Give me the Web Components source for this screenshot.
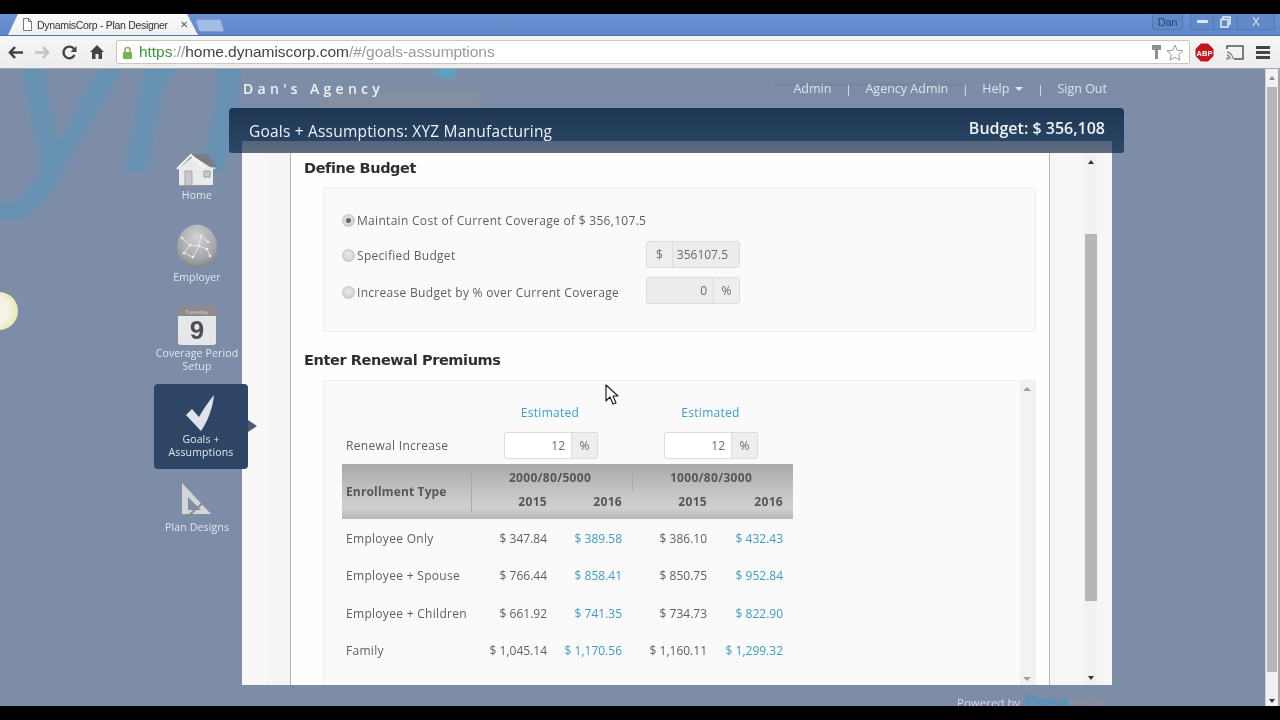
<!DOCTYPE html>
<html>
<head>
<meta charset="utf-8">
<title>DynamisCorp - Plan Designer</title>
<style>
  html, body { margin: 0; height: 720px; overflow: hidden; background: #000; }
  body { font-family: "Open Sans", "DejaVu Sans", sans-serif; }
</style>
</head>
<body>
<app-shell>
  <browser-frame slot="browser"></browser-frame>
  <top-nav slot="top"></top-nav>
  <title-bar slot="top" title-text="Goals + Assumptions: XYZ Manufacturing" budget="Budget: $ 356,108"></title-bar>
  <side-nav slot="side"></side-nav>
  <main-panel slot="main">
    <form-section heading="Define Budget" style="--head-gap:5px"><budget-form></budget-form></form-section>
    <form-section heading="Enter Renewal Premiums" style="--head-gap:6px;--head-top:14px;--box-h:320px;--box-bar:block"><premium-table></premium-table></form-section>
  </main-panel>
</app-shell>

<script>
class AppShell extends HTMLElement {
  constructor() {
    super();
    this.attachShadow({ mode: "open" });
    this.shadowRoot.innerHTML = `
    <style>
    :host { display: flex; flex-direction: column; width: 1280px; height: 720px; background: #000; filter: blur(.35px); }
    .bar { height: 14px; flex: none; background: #000; position: relative; z-index: 5; }
    .viewport {
        flex: 1;
        min-height: 0;
        position: relative;
        overflow: hidden;
        background: #7e8da7;
        display: flex;
    }
    .page { width: 1265px; flex: none; display: flex; flex-direction: column; position: relative; }
    .top { display: flex; flex-direction: column; }
    .row { display: flex; padding-left: 154px; }
    .side { display: block; width: 94px; flex: none; margin-right: -6px; position: relative; z-index: 2; }
    .powered {
        margin: 9px 0 0 957px;
        display: flex;
        align-items: center;
        gap: 5px;
        font-size: 11.500px;
        color: #d5dce8;
    }
    .logo { font-size: 17px; line-height: 17px; font-weight: 700; color: #3f97c4; filter: blur(.8px); }
    .logo b { color: #8b8f98; }
    /* backdrop art, sits under everything */
    .mark {
        position: absolute;
        left: -162px;
        top: -112px;
        font: italic 400 232px "Liberation Sans", sans-serif;
        -webkit-text-stroke: 3px #5f93b6;
        color: #5f93b6;
        opacity: .72;
        filter: blur(2px);
        white-space: nowrap;
    }
    .mark::before { content: "Dyn"; }
    .ball {
        position: absolute;
        left: -20px;
        top: 223px;
        width: 38px;
        height: 38px;
        border-radius: 50%;
        background: radial-gradient(circle at 40% 50%, #f3f3e8 0 45%, #e4e69c 85%, #d3d68a 100%);
    }
    .smudge { position: absolute; background: #86919f; filter: blur(5px); opacity: .7; }
    .dot { position: absolute; left: 436px; top: -6px; width: 20px; height: 16px; border-radius: 50%; background: #5d9fc6; filter: blur(2px); }
    .cursor { position: absolute; left: 605px; top: 315px; z-index: 4; }
    .scroll {
        width: 15px;
        flex: none;
        display: flex;
        flex-direction: column;
        align-items: stretch;
        background: #f1f1f1;
        position: relative;
        border-left: 1px solid #cfd2d6;
        border-right: 2px solid #a4a6a9;
        box-sizing: border-box;
    }
    .scroll i { display: block; width: 0; height: 0; margin: 7px auto 7px; border: 3px solid transparent; border-top: 0; border-bottom: 4px solid #8a8a8a; }
    .thumb { flex: 1; margin: 0 1px; background: #b6b6b6; }
    .scroll i.down { margin: 27px auto 3px; border-bottom: 0; border-top: 4px solid #333; }
    </style>
    <div class="bar"></div>
    <slot name="browser"></slot>
    <div class="viewport">
      <div class="page">
        <span class="mark"></span>
        <span class="dot"></span>
        <span class="smudge" style="left:320px;top:22px;width:160px;height:18px"></span>
        <span class="smudge" style="left:775px;top:14px;width:190px;height:3px;background:#6f7c92;filter:blur(1px);opacity:.45"></span>
        <span class="ball"></span>
        <div class="top"><slot name="top"></slot></div>
        <div class="row">
          <div class="side"><slot name="side"></slot></div>
          <slot name="main"></slot>
        </div>
        <div class="powered"><span>Powered by</span><span class="logo">Dyna<b>mix</b></span></div>
        <svg class="cursor" width="14" height="22" viewBox="0 0 14 22">
          <path d="M1 1v16l4-4 3 7 3-1-3-7h5z" fill="#fff" stroke="#222" stroke-width="1.2" stroke-linejoin="round"/>
        </svg>
      </div>
      <div class="scroll"><i></i><div class="thumb"></div><i class="down"></i></div>
    </div>
    <div class="bar"></div>
    `;
  }
}

class BrowserFrame extends HTMLElement {
  constructor() {
    super();
    this.attachShadow({ mode: "open" });
    this.shadowRoot.innerHTML = `
    <style>
    :host { display: block; flex: none; font-family: "Liberation Sans", sans-serif; }
    .tabs {
        height: 22px;
        display: flex;
        align-items: flex-end;
        padding-left: 8px;
        background: linear-gradient(#6c93d4, #5f87c9);
        border-bottom: 1px solid #4f73ad;
        box-sizing: border-box;
    }
    .tab {
        width: 190px;
        height: 21px;
        box-sizing: border-box;
        background: linear-gradient(#fafafa, #f1f1f1);
        clip-path: polygon(0 100%, 10px 0, calc(100% - 11px) 0, 100% 100%);
        display: flex;
        align-items: center;
        padding: 0 0 0 14px;
        gap: 4px;
        font-size: 10.500px;
        letter-spacing: -.3px;
        white-space: nowrap;
        color: #333;
    }
    .tab .x { margin-left: 8px; font-size: 10px; color: #555; }
    .new {
        width: 26px;
        height: 13px;
        margin: 0 0 3px -1px;
        background: #a3bde6;
        border: 1px solid #7b9bcd;
        box-sizing: border-box;
        transform: skewX(16deg);
        border-radius: 2px;
    }
    .win { margin-left: auto; align-self: flex-start; display: flex; height: 16px; margin-right: 5px; color: #26456f; font-size: 11px; }
    .win span {
        display: flex; align-items: center; justify-content: center;
        background: #628ac9;
        border: 1px solid #5379b5;
        border-top: 0;
        box-sizing: border-box;
        border-radius: 0 0 3px 3px;
    }
    .win .who { width: 31px; margin-right: 7px; letter-spacing: -.3px; }
    .win .c { width: 24px; border-radius: 0; border-left: 0; }
    .win .c.first { border-left: 1px solid #5379b5; border-radius: 0 0 0 3px; }
    .win .close { width: 37px; border-left: 0; border-radius: 0 0 3px 0; font-size: 12px; color: #dfe7f4; }
    .tools {
        height: 33px;
        box-sizing: border-box;
        display: flex;
        align-items: center;
        background: linear-gradient(#f6f6f6, #ececec);
        border-bottom: 1px solid #a5a8ac;
    }
    .tool { flex: none; width: 27px; display: flex; justify-content: center; }
    .tools .lead { width: 2px; }
    .omni {
        flex: none;
        width: 1074px;
        height: 24px;
        margin-left: 6px;
        box-sizing: border-box;
        background: #fff;
        border: 1px solid #c9c9b8;
        border-radius: 2px;
        display: flex;
        align-items: center;
        padding-left: 5px;
        font-family: "Liberation Sans", sans-serif;
        font-size: 15.5px;
        letter-spacing: -.04px;
        color: #9a9a9a;
    }
    .omni svg { flex: none; }
    .omni .lock { margin-right: 6px; }
    .omni .https { color: #3a9a36; }
    .omni .host { color: #444; }
    .end { margin-left: auto; display: flex; align-items: center; margin-right: 5px; }
    .right { display: flex; align-items: center; margin-left: 1px; }
    </style>
    <div class="tabs">
      <div class="tab">
        <svg width="11" height="13" viewBox="0 0 11 13"><path d="M1.5.5h5l3 3v9h-8zM6.5.5v3h3" fill="#fff" stroke="#777"/></svg>
        <span>DynamisCorp - Plan Designer</span><span class="x">&#10005;</span>
      </div>
      <div class="new"></div>
      <div class="win">
        <span class="who">Dan</span>
        <span class="c first"><svg width="11" height="4"><rect width="11" height="3" rx="1" fill="#dfe7f4"/></svg></span>
        <span class="c"><svg width="11" height="12" viewBox="0 0 11 12"><path d="M3 3V1h7v7H8M1 3.500h7v7.500H1z" fill="none" stroke="#e4ebf6" stroke-width="1.500"/></svg></span>
        <span class="close">X</span>
      </div>
    </div>
    <div class="tools">
      <span class="lead"></span>
      <span class="tool"><svg width="15" height="13" viewBox="0 0 15 13"><path d="M7 1 2 6.500 7 12M2 6.500h13" fill="none" stroke="#444" stroke-width="2.600"/></svg></span>
      <span class="tool"><svg width="15" height="13" viewBox="0 0 15 13"><path d="M8 1l5 5.500L8 12M13 6.500H0" fill="none" stroke="#c2c2c2" stroke-width="2.600"/></svg></span>
      <span class="tool"><svg width="15" height="15" viewBox="0 0 15 15"><path d="M12.500 10A5.800 5.800 0 1 1 12 4" fill="none" stroke="#444" stroke-width="2.400"/><path d="M14.500 1v6h-6z" fill="#444"/></svg></span>
      <span class="tool"><svg width="14" height="14" viewBox="0 0 14 14"><path d="M7 0 0 7h2v7h3.500V9h3v5H12V7h2z" fill="#444"/></svg></span>
      <div class="omni">
        <svg class="lock" width="11" height="13" viewBox="0 0 11 13"><path d="M3 6V4a2.500 2.500 0 0 1 5 0v2" fill="none" stroke="#8aa86c" stroke-width="1.500"/><rect x="1" y="6" width="9" height="7" rx="1" fill="#79b64a"/></svg>
        <span class="https">https</span><span>://</span><span class="host">home.dynamiscorp.com</span><span>/#/goals-assumptions</span>
        <span class="end">
          <svg width="12" height="16" viewBox="0 0 12 16" style="margin-right:3px"><path d="M1 1h9v5H7v9H4V6H1z" fill="#8f8f8f"/></svg>
          <svg width="18" height="17" viewBox="0 0 18 17"><path d="M9 1l2.300 5.300 5.700.5-4.300 3.800 1.300 5.600L9 13.300 4 16.200l1.300-5.600L1 6.800l5.700-.5z" fill="#fff" stroke="#9a9a9a"/></svg>
        </span>
      </div>
      <div class="right">
        <svg style="margin-left:4px" width="19" height="19" viewBox="0 0 19 19"><path d="M6 .5h7L18.500 6v7L13 18.500H6L.5 13V6z" fill="#c4161c"/><text x="9.500" y="12.500" font-size="7.500" font-weight="700" fill="#fff" text-anchor="middle" font-family="Liberation Sans">ABP</text></svg>
        <svg style="margin-left:12px" width="18" height="15" viewBox="0 0 18 15"><path d="M1 4V1h16v13H8" fill="none" stroke="#555" stroke-width="1.500"/><path d="M1 7a7 7 0 0 1 6 7M1 10a4 4 0 0 1 3 4" fill="none" stroke="#888" stroke-width="1.300"/><circle cx="1.500" cy="13.500" r="1.200" fill="#888"/></svg>
        <svg style="margin-left:12px" width="14" height="13" viewBox="0 0 14 13"><path d="M0 0h14v3H0zM0 5h14v3H0zM0 10h14v3H0z" fill="#444"/></svg>
      </div>
    </div>
    `;
  }
}

class TopNav extends HTMLElement {
  constructor() {
    super();
    this.attachShadow({ mode: "open" });
    this.shadowRoot.innerHTML = `
    <style>
    :host {
        display: flex;
        align-items: center;
        height: 39px;
        padding: 0 158px 0 243px;
        position: relative;
        color: #dce2ec;
        font-size: 12.500px;
    }
    .brand { font-size: 14px; font-weight: 600; letter-spacing: 4.300px; color: #eef1f5; }
    ul { display: flex; align-items: center; margin: 0 0 0 auto; padding: 0; list-style: none; }
    li + li::before { content: "|"; margin: 0 14px; font-size: 11px; color: #e8ecf2; }
    .caret { display: inline-block; margin-left: 6px; border: 4px solid transparent; border-top-color: #e2e7ef; border-bottom: 0; vertical-align: 2px; }
    </style>
    <span class="brand">Dan's Agency</span>
    <ul>
      <li>Admin</li>
      <li>Agency Admin</li>
      <li>Help<span class="caret"></span></li>
      <li>Sign Out</li>
    </ul>
    `;
  }
}

class TitleBar extends HTMLElement {
  constructor() {
    super();
    this.attachShadow({ mode: "open" });
    this.shadowRoot.innerHTML = `
    <style>
    :host {
        display: flex;
        justify-content: space-between;
        align-items: flex-start;
        box-sizing: border-box;
        width: 895px;
        height: 45px;
        margin-left: 229px;
        padding: 12px 19px 0 20px;
        background: linear-gradient(#1d3653, #2c4866);
        border-radius: 4px 4px 3px 3px;
        color: #eef1f5;
        position: relative;
        font-size: 15.500px;
        letter-spacing: .2px;
    }
    :host::after {
        content: "";
        position: absolute;
        left: 13px;
        right: 12px;
        top: 33px;
        bottom: 0;
        background: linear-gradient(#54647a, #5f6d82);
    }
    span { position: relative; z-index: 1; }
    .budget { font-size: 16px; font-weight: 600; margin-top: -3px; letter-spacing: 0; }
    </style>
    <span class="name"></span><span class="budget"></span>
    `;
  }

  connectedCallback() {
    this.shadowRoot.querySelector(".name").textContent = this.getAttribute("title-text");
    this.shadowRoot.querySelector(".budget").textContent = this.getAttribute("budget");
  }
}

const NAV_ICONS = {
  home: `<svg width="42" height="34" viewBox="0 0 42 34">
    <path d="M2 16 19 2h10l12 13-4 1v16l-34 1V16z" fill="#e9eaec"/>
    <path d="M14 1h17l11 14-8-1z" fill="#7a7d84"/>
    <path d="M1 16 15 2l13 13" fill="none" stroke="#f5f5f5" stroke-width="2"/>
    <path d="M9 18h7v15H9z" fill="#c6c8cb" stroke="#a5a7ab"/>
    <path d="M28 18h6v6h-6z" fill="#c6c8cb" stroke="#9a9da2"/>
    <path d="M3 33h35" stroke="#8a8e94" stroke-width="1.500"/>
  </svg>`,
  globe: `<svg width="42" height="45" viewBox="0 0 42 45">
    <defs><radialGradient id="g" cx=".5" cy=".3" r=".75"><stop offset="0" stop-color="#d2d3d5"/><stop offset=".7" stop-color="#a0a2a5"/><stop offset="1" stop-color="#77797d"/></radialGradient></defs>
    <ellipse cx="21" cy="22.500" rx="20" ry="22" fill="url(#g)"/>
    <path d="M6 14l8 7-6 8 9 4 6-11 8 3 3 7M14 21l9 1M23 22l2-10 7 6" fill="none" stroke="#e4e5e7" stroke-width="1"/>
    <g fill="#eeeff0"><circle cx="6" cy="14" r="1.300"/><circle cx="14" cy="21" r="1.300"/><circle cx="8" cy="29" r="1.300"/><circle cx="17" cy="33" r="1.300"/><circle cx="23" cy="22" r="1.300"/><circle cx="25" cy="12" r="1.300"/><circle cx="32" cy="18" r="1.300"/><circle cx="31" cy="25" r="1.300"/><circle cx="34" cy="32" r="1.300"/></g>
  </svg>`,
  calendar: `<svg width="38" height="39" viewBox="0 0 38 39">
    <path d="M3 0h32a3 3 0 0 1 3 3v7H0V3a3 3 0 0 1 3-3z" fill="#8e8a8c"/>
    <path d="M0 10h38v26a3 3 0 0 1-3 3H3a3 3 0 0 1-3-3z" fill="#e6e7e9"/>
    <text x="19" y="7.500" font-size="6" fill="#cfcfcf" text-anchor="middle" font-family="Liberation Sans">Tuesday</text>
    <text x="19" y="33" font-size="26" font-weight="700" fill="#4d4f52" text-anchor="middle" font-family="Liberation Sans">9</text>
  </svg>`,
  check: `<svg width="32" height="36" viewBox="0 0 32 36">
    <path d="M1 20l6-6 7 8C19 13 24 6 29 0c-1 12-6 26-13 36z" fill="#dfe3ea"/>
  </svg>`,
  square: `<svg width="32" height="36" viewBox="0 0 32 36">
    <path d="M1 0 30 31H1z" fill="#d3d5d9"/>
    <path d="M7 14 20 27H7z" fill="#7e8da7"/>
    <path d="M5 35 25 17" stroke="#8a8a86" stroke-width="2"/>
  </svg>`
};

class NavItem extends HTMLElement {
  constructor() {
    super();
    this.attachShadow({ mode: "open" });
    this.shadowRoot.innerHTML = `
    <style>
    :host {
        display: flex;
        flex-direction: column;
        align-items: center;
        box-sizing: border-box;
        width: 86px;
        font-size: 10.500px;
        line-height: 13px;
        letter-spacing: .15px;
        text-align: center;
        color: #e1e6ee;
        position: relative;
    }
    :host([active]) {
        width: 94px;
        height: 85px;
        padding-top: 11px;
        background: #2f4566;
        border-radius: 4px;
    }
    :host([active])::after {
        content: "";
        position: absolute;
        left: 100%;
        top: 36px;
        border: 6px solid transparent;
        border-left: 9px solid #4e5c70;
        border-right: 0;
    }
    svg { display: block; }
    .ico { display: block; margin-bottom: 2px; }
    </style>
    <span class="ico"></span>
    <slot></slot>
    `;
  }

  connectedCallback() {
    this.shadowRoot.querySelector(".ico").innerHTML = NAV_ICONS[this.getAttribute("icon")];
  }
}

class SideNav extends HTMLElement {
  constructor() {
    super();
    this.attachShadow({ mode: "open" });
    this.shadowRoot.innerHTML = `
    <style>
    :host { display: flex; flex-direction: column; align-items: flex-start; }
    </style>
    <nav-item icon="home">Home</nav-item>
    <nav-item icon="globe" style="margin-top:22px">Employer</nav-item>
    <nav-item icon="calendar" style="margin-top:22px">Coverage Period<br>Setup</nav-item>
    <nav-item icon="check" active style="margin-top:11px">Goals +<br>Assumptions</nav-item>
    <nav-item icon="square" style="margin-top:14px">Plan Designs</nav-item>
    `;
  }
}

class MainPanel extends HTMLElement {
  constructor() {
    super();
    this.attachShadow({ mode: "open" });
    this.shadowRoot.innerHTML = `
    <style>
    :host {
        display: flex;
        flex: none;
        width: 870px;
        height: 532px;
        background: #f6f6f6;
        overflow: hidden;
        position: relative;
    }
    .gutter { width: 48px; flex: none; background: linear-gradient(90deg, #f8f8f8 0 24px, #f5f5f5 24px); }
    .content {
        width: 760px;
        flex: none;
        box-sizing: border-box;
        background: #fefefd;
        border-left: 1.500px solid #b4b4b4;
        border-right: 1.500px solid #b4b4b4;
        padding: 1px 13px 0 32px;
    }
    .rail { flex: 1; display: flex; padding-left: 34px; padding-right: 15px; }
    .track { width: 13px; display: flex; flex-direction: column; background: #f1f1f1; }
    .track i { display: block; width: 0; height: 0; margin: 7px auto 0; border: 3.500px solid transparent; border-top: 0; border-bottom: 4px solid #333; }
    .track i.down { margin: 0 auto 5px; border-bottom: 0; border-top: 4px solid #333; }
    .thumb { margin: 70px 0 0 1px; height: 367px; background: #b6b6b6; }
    .fill { flex: 1; }
    </style>
    <div class="gutter"></div>
    <div class="content"><slot></slot></div>
    <div class="rail">
      <div class="track"><i></i><div class="thumb"></div><div class="fill"></div><i class="down"></i></div>
    </div>
    `;
  }
}

class FormSection extends HTMLElement {
  constructor() {
    super();
    this.attachShadow({ mode: "open" });
    this.shadowRoot.innerHTML = `
    <style>
    :host { display: block; }
    h2 {
        margin: var(--head-top, 0) 0 var(--head-gap, 5px) -19px;
        height: 28px;
        font: 700 14.500px/28px "DejaVu Sans", sans-serif;
        letter-spacing: -.4px;
        color: #2d2f33;
    }
    .box {
        box-sizing: border-box;
        height: var(--box-h, 145px);
        background: #fafafa;
        border: 1px solid #efefef;
        border-radius: 2px;
        position: relative;
    }
    .bar { display: var(--box-bar, none); position: absolute; right: 0; top: 0; bottom: 0; width: 15px; background: #f2f2f2; }
    .bar i { position: absolute; left: 3px; width: 0; height: 0; border: 4px solid transparent; }
    .bar .up { top: 6px; border-top: 0; border-bottom: 4px solid #a0a0a0; }
    .bar .down { top: 296px; border-bottom: 0; border-top: 4px solid #a0a0a0; }
    </style>
    <h2></h2>
    <div class="box"><slot></slot><div class="bar"><i class="up"></i><i class="down"></i></div></div>
    `;
  }

  connectedCallback() {
    this.shadowRoot.querySelector("h2").textContent = this.getAttribute("heading");
  }
}

class InputGroup extends HTMLElement {
  constructor() {
    super();
    this.attachShadow({ mode: "open" });
    this.shadowRoot.innerHTML = `
    <style>
    :host {
        display: inline-flex;
        box-sizing: border-box;
        width: 94px;
        height: 27px;
        border: 1px solid #dcdcdc;
        border-radius: 3px;
        background: #ececec;
        font-size: 12px;
        letter-spacing: 0;
        color: #6a6a6a;
        overflow: hidden;
    }
    :host([plain]) .val { background: #fff; }
    :host([prefix]) .val { padding-right: 11px; }
    .val { flex: 1; display: flex; align-items: center; justify-content: flex-end; padding-right: 6px; }
    .add { display: flex; align-items: center; justify-content: center; flex: none; width: 25px; background: #eeeeee; }
    .add.pre { border-right: 1px solid #dcdcdc; }
    .add.post { border-left: 1px solid #dcdcdc; }
    </style>
    <span class="add pre"></span>
    <span class="val"></span>
    <span class="add post"></span>
    `;
  }

  connectedCallback() {
    const pre = this.shadowRoot.querySelector(".pre");
    const post = this.shadowRoot.querySelector(".post");
    if (this.hasAttribute("prefix")) {
      pre.textContent = this.getAttribute("prefix");
    } else {
      pre.style.display = "none";
    }
    if (this.hasAttribute("suffix")) {
      post.textContent = this.getAttribute("suffix");
    } else {
      post.style.display = "none";
    }
    this.shadowRoot.querySelector(".val").textContent = this.getAttribute("value");
  }
}

class RadioRow extends HTMLElement {
  constructor() {
    super();
    this.attachShadow({ mode: "open" });
    this.shadowRoot.innerHTML = `
    <style>
    :host {
        display: flex;
        align-items: center;
        font-size: 12px;
        letter-spacing: .3px;
        color: #5c5f63;
    }
    .radio {
        width: 11px;
        height: 11px;
        margin-right: 2px;
        flex: none;
        border-radius: 50%;
        background: radial-gradient(circle at 50% 40%, #eaeaea, #c9c9c9);
        border: 1px solid #c4c4c4;
        display: flex;
        align-items: center;
        justify-content: center;
    }
    :host([checked]) .radio::after { content: ""; width: 5px; height: 5px; border-radius: 50%; background: #666; }
    .label { width: 289px; flex: none; white-space: nowrap; }
    ::slotted(input-group) { margin-top: -3px; }
    </style>
    <span class="radio"></span>
    <span class="label"><slot></slot></span>
    <slot name="input"></slot>
    `;
  }
}

class BudgetForm extends HTMLElement {
  constructor() {
    super();
    this.attachShadow({ mode: "open" });
    this.shadowRoot.innerHTML = `
    <style>
    :host {
        display: grid;
        grid-template-rows: 36px 35px 38px;
        padding: 14px 0 0 18px;
    }
    </style>
    <radio-row checked>Maintain Cost of Current Coverage of $ 356,107.5</radio-row>
    <radio-row>Specified Budget<input-group slot="input" prefix="$" value="356107.5"></input-group></radio-row>
    <radio-row>Increase Budget by % over Current Coverage<input-group slot="input" suffix="%" value="0"></input-group></radio-row>
    `;
  }
}

const PREMIUM_ROWS = [
  ["Employee Only", "$ 347.84", "$ 389.58", "$ 386.10", "$ 432.43"],
  ["Employee + Spouse", "$ 766.44", "$ 858.41", "$ 850.75", "$ 952.84"],
  ["Employee + Children", "$ 661.92", "$ 741.35", "$ 734.73", "$ 822.90"],
  ["Family", "$ 1,045.14", "$ 1,170.56", "$ 1,160.11", "$ 1,299.32"]
];

class PremiumTable extends HTMLElement {
  constructor() {
    super();
    this.attachShadow({ mode: "open" });
    this.shadowRoot.innerHTML = `
    <style>
    :host {
        display: block;
        width: 451px;
        margin: 17px 0 0 18px;
        font-size: 12px;
        letter-spacing: .3px;
        color: #5c5f63;
    }
    .grid { display: grid; grid-template-columns: 130px 80px 80px 80px 81px; }
    .est { grid-column: span 2; text-align: center; color: #3f9cc6; padding-right: 4px; }
    .top { height: 28px; align-items: center; }
    .renew { height: 38px; align-items: center; }
    .renew .cell { padding-left: 4px; }
    .renew .gr { grid-column: span 2; padding-left: 32px; }
    .head {
        height: 55px;
        grid-template-rows: 26px 22px;
        background: linear-gradient(#a9a9a9, #c6c6c6 55%, #cfcfcf 80%, #b9b9b9);
        font-weight: 700;
        color: #55575b;
    }
    .type { grid-row: span 2; align-self: stretch; display: flex; align-items: center; padding: 7px 0 0 4px; border-right: 1px solid #a8a8a8; letter-spacing: .15px; }
    .plan { grid-column: span 2; display: flex; align-items: center; justify-content: center; padding-right: 4px; }
    .plan + .plan { border-left: 1px solid #a8a8a8; }
    .y { display: flex; align-items: center; justify-content: flex-end; }
    .y.a { padding-right: 5px; }
    .y.b { padding-right: 10px; }
    .body { padding-top: .5px; }
    .row { height: 37.500px; align-items: center; }
    .row > span { text-align: right; white-space: nowrap; letter-spacing: 0; }
    .row > .name { text-align: left; padding-left: 4px; letter-spacing: .3px; }
    .row > .a { padding-right: 5px; }
    .row > .b { padding-right: 10px; color: #3f9cc6; }
    </style>
    <div class="grid top"><span></span><span class="est">Estimated</span><span class="est">Estimated</span></div>
    <div class="grid renew">
      <span class="cell">Renewal Increase</span>
      <span class="gr"><input-group plain suffix="%" value="12"></input-group></span>
      <span class="gr"><input-group plain suffix="%" value="12"></input-group></span>
    </div>
    <div class="grid head">
      <span class="type">Enrollment Type</span>
      <span class="plan">2000/80/5000</span>
      <span class="plan">1000/80/3000</span>
      <span class="y a">2015</span><span class="y b">2016</span>
      <span class="y a">2015</span><span class="y b">2016</span>
    </div>
    <div class="body"></div>
    `;
  }

  connectedCallback() {
    this._render();
  }

  _render() {
    const body = this.shadowRoot.querySelector(".body");
    body.innerHTML = PREMIUM_ROWS.map((r) => `
      <div class="grid row">
        <span class="name">${r[0]}</span>
        <span class="a">${r[1]}</span><span class="b">${r[2]}</span>
        <span class="a">${r[3]}</span><span class="b">${r[4]}</span>
      </div>`).join("");
  }
}

customElements.define("app-shell", AppShell);
customElements.define("browser-frame", BrowserFrame);
customElements.define("top-nav", TopNav);
customElements.define("title-bar", TitleBar);
customElements.define("nav-item", NavItem);
customElements.define("side-nav", SideNav);
customElements.define("main-panel", MainPanel);
customElements.define("form-section", FormSection);
customElements.define("input-group", InputGroup);
customElements.define("radio-row", RadioRow);
customElements.define("budget-form", BudgetForm);
customElements.define("premium-table", PremiumTable);
</script>
</body>
</html>
